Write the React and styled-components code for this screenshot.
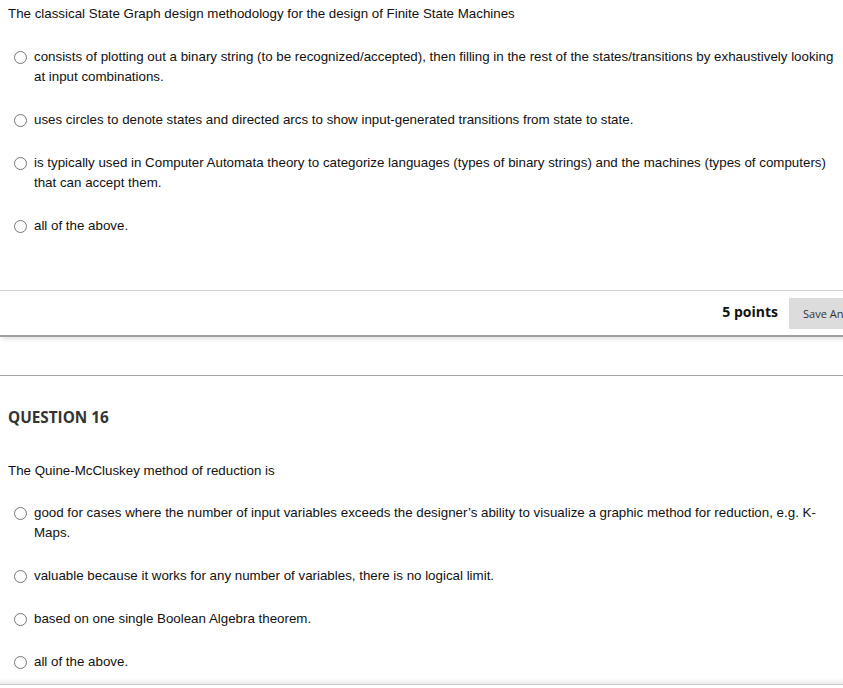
import styled, { createGlobalStyle } from "styled-components";

const GlobalStyle = createGlobalStyle`
  html, body {
    margin: 0;
    padding: 0;
    background: #fff;
    overflow: hidden;
  }
  body {
    font-family: "Liberation Sans", Arial, sans-serif;
    font-size: 13.33px;
    color: #111;
  }
`;

const Page = styled.div`
  width: 843px;
  overflow: hidden;
`;

const Question = styled.div`
  padding: 4px 0 0 8px;
`;

const Prompt = styled.div`
  line-height: 20px;
  margin-bottom: ${(p) => p.gap || 22}px;
`;

const Options = styled.ul`
  list-style: none;
  margin: 0;
  padding: 0 0 0 6px;
  display: flex;
  flex-direction: column;
  gap: 23px;
`;

const Option = styled.li`
  display: flex;
  align-items: flex-start;
  gap: 7px;
`;

const Radio = styled.span`
  flex: none;
  width: 11px;
  height: 11px;
  margin-top: 4px;
  border: 1px solid #767676;
  border-radius: 50%;
  background: #fff;
`;

const OptionText = styled.span`
  line-height: 20px;
  max-width: 806px;
`;

const Footer = styled.div`
  margin-top: 54px;
  border-top: 1px solid #d0d0d0;
  border-bottom: 2px solid #a0a0a0;
  box-shadow: 0 4px 5px -2px rgba(0, 0, 0, 0.12);
  height: 44px;
  display: flex;
  align-items: center;
  justify-content: flex-end;
  width: 890px;
`;

const Points = styled.span`
  font-family: "Open Sans", sans-serif;
  font-weight: 700;
  font-size: 14px;
  color: #111;
  margin: 0 11px 3px 0;
`;

const SaveButton = styled.button`
  font-family: "Open Sans", sans-serif;
  font-size: 11px;
  color: #333;
  background: #dcdcdc;
  border: none;
  height: 31px;
  padding: 0 14px;
  width: 101px;
  text-align: left;
`;

const Divider = styled.div`
  margin-top: 38px;
  border-top: 1px solid #a5a5a5;
`;

const QuestionTitle = styled.h2`
  font-family: "Open Sans", sans-serif;
  font-weight: 700;
  font-size: 15.3px;
  color: #333;
  margin: 0;
  padding: 30px 0 0 8px;
  line-height: 22px;
`;

const Body = styled.div`
  padding: 33px 0 0 8px;
`;

const BottomEdge = styled.div`
  margin-top: 6px;
  height: 6px;
  background: linear-gradient(#fff, #ececec);
  border-bottom: 1px solid #c8c8c8;
  box-shadow: 0 4px 0 #f0f0f0;
`;

const q15 = [
  "consists of plotting out a binary string (to be recognized/accepted), then filling in the rest of the states/transitions by exhaustively looking at input combinations.",
  "uses circles to denote states and directed arcs to show input-generated transitions from state to state.",
  "is typically used in Computer Automata theory to categorize languages (types of binary strings) and the machines (types of computers) that can accept them.",
  "all of the above.",
];

const q16 = [
  "good for cases where the number of input variables exceeds the designer\u2019s ability to visualize a graphic method for reduction, e.g. K-Maps.",
  "valuable because it works for any number of variables, there is no logical limit.",
  "based on one single Boolean Algebra theorem.",
  "all of the above.",
];

function OptionList({ items }) {
  return (
    <Options>
      {items.map((t, i) => (
        <Option key={i}>
          <Radio />
          <OptionText>{t}</OptionText>
        </Option>
      ))}
    </Options>
  );
}

export default function App() {
  return (
    <Page>
      <GlobalStyle />
      <Question>
        <Prompt gap={23}>The classical State Graph design methodology for the design of Finite State Machines</Prompt>
        <OptionList items={q15} />
      </Question>
      <Footer>
        <Points>5 points</Points>
        <SaveButton>Save Answer</SaveButton>
      </Footer>
      <Divider />
      <QuestionTitle>QUESTION 16</QuestionTitle>
      <Body>
        <Prompt gap={22}>The Quine-McCluskey method of reduction is</Prompt>
        <OptionList items={q16} />
      </Body>
      <BottomEdge />
    </Page>
  );
}
